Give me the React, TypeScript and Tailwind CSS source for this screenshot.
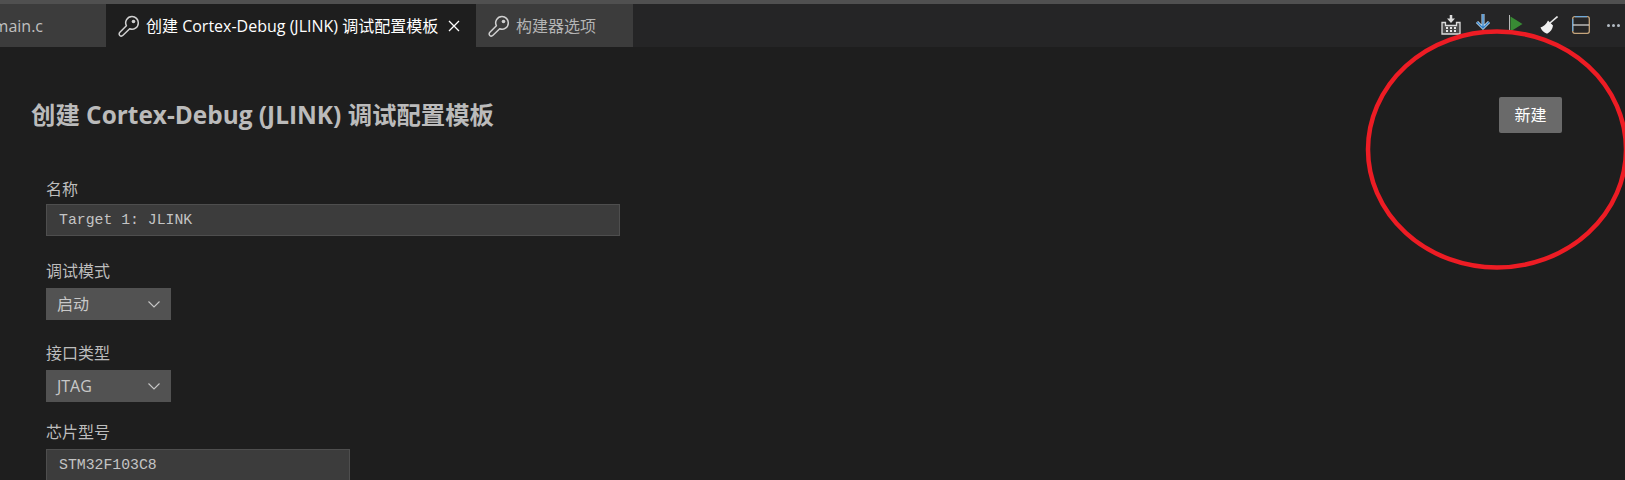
const CJK = "font-['Open_Sans','Noto_Sans_CJK_SC',sans-serif]";

function KeyIcon() {
  return (
    <svg width="22" height="22" viewBox="0 0 22 22" fill="none" stroke="#d0d0d0" strokeWidth="1.500" strokeLinejoin="round" className="shrink-0">
      <path d="M14 1.500a6.300 6.300 0 0 1 6.300 6.400 6.300 6.300 0 0 1-8.600 5.800L5 20.300c-1 1-2.300 1-3.200.2-.9-.9-.9-2.200.1-3.200l6.500-6.600A6.300 6.300 0 0 1 14 1.500z" />
      <circle cx="15.500" cy="6.500" r="1.800" fill="#d0d0d0" stroke="none" />
    </svg>
  );
}

function Chevron() {
  return (
    <svg width="14" height="14" viewBox="0 0 14 14" fill="none" stroke="#c8c8c8" strokeWidth="1.100">
      <path d="M1.500 4.500 7 10l5.500-5.500" />
    </svg>
  );
}

function Toolbar() {
  return (
    <div className="ml-auto flex h-full items-center">
      <svg width="20" height="20" viewBox="0 0 20 20" className="mb-[2px]">
        <path d="M10 0v6" stroke="#dcdcdc" strokeWidth="2.500" fill="none" />
        <path d="M6 3.500 10 8l4-4.500z" fill="#dcdcdc" />
        <path d="M1 7.500h3.500v3h11v-3H19V19H1z" fill="#4a4a4a" stroke="#dcdcdc" strokeWidth="1.300" />
        <path d="M5 12h2v2H5zM9 12h2v2H9zM13 12h2v2h-2zM5 15h2v2H5zM9 15h2v2H9zM13 15h2v2h-2z" fill="#e8e8e8" />
      </svg>
      <svg width="16" height="21" viewBox="0 0 16 21" className="mb-[5px] ml-[14px]">
        <path d="M8 1v14M2 9l6 6 6-6" stroke="#c8dcec" strokeWidth="3" fill="none" />
        <path d="M8 1v14M2 9l6 6 6-6" stroke="#2f7fc8" strokeWidth="1.300" fill="none" />
        <path d="M1 19.500h14" stroke="#e0e0e0" strokeWidth="2" />
      </svg>
      <svg width="14" height="18" viewBox="0 0 14 18" className="mb-[4px] ml-[18px]">
        <path d="M.5 0v18" stroke="#b8b8b8" strokeWidth="1" />
        <path d="M1.500 1.500v15L13.500 9z" fill="#388a34" />
      </svg>
      <svg width="18" height="18" viewBox="0 0 18 18" className="mb-[2px] ml-[17px]">
        <path d="M17.500.5 10 7" stroke="#e8e8e8" strokeWidth="1.600" />
        <path d="M8 4.500 13 9.500c-.4 3.500-2.500 6.500-5.500 8C5 17.500 2 15 .5 11.500 3.500 10.500 6.500 8 8 4.500z" fill="#f0f0f0" />
      </svg>
      <svg width="18" height="18" viewBox="0 0 18 18" fill="none" className="mb-[1px] ml-[14px]">
        <rect x=".7" y=".7" width="16.600" height="16.600" rx="2" stroke="#c5a57c" strokeWidth="1.300" />
        <path d="M.7 3v12M3 .7h12" stroke="#6fa8d8" strokeWidth="1.300" />
        <path d="M1 9h16" stroke="#d0d0d0" strokeWidth="1.300" />
      </svg>
      <div className="mr-[5px] ml-[17px] flex gap-[2px]">
        <span className="size-[3px] rounded-full bg-[#b4bcc4]" />
        <span className="size-[3px] rounded-full bg-[#b4bcc4]" />
        <span className="size-[3px] rounded-full bg-[#b4bcc4]" />
      </div>
    </div>
  );
}

function Field({ label, className, children }: { label: string; className: string; children: React.ReactNode }) {
  return (
    <div className={`flex flex-col ${className}`}>
      <label className="h-[20px] text-[16px] leading-[20px] text-[#bdbdbd]">{label}</label>
      {children}
    </div>
  );
}

function TextBox({ value, width }: { value: string; width: string }) {
  return (
    <div className={`flex h-[32px] items-center border border-[#4e4e4e] bg-[#3c3c3c] pl-[12px] font-['Liberation_Mono',monospace] text-[14.800px] text-[#c4c4c4] ${width}`}>
      {value}
    </div>
  );
}

function Select({ value }: { value: string }) {
  return (
    <div className="flex h-[32px] w-[125px] items-center justify-between bg-[#525252] pl-[11px] pr-[10px] text-[16px] text-[#c8c8c8]">
      {value}
      <Chevron />
    </div>
  );
}

export default function App() {
  return (
    <div className={`relative h-[480px] w-[1625px] overflow-hidden bg-[#1e1e1e] ${CJK}`}>
      <div className="h-[4px] bg-[#505050]" />
      {/* Tabs */}
      <div className="flex h-[43px] items-center bg-[#252526] text-[16px]">
        <div className="flex h-full w-[106px] items-center justify-end bg-[#3c3c3c] pr-[63px] text-[#c0c0c0]">
          <span className="whitespace-nowrap">main.c</span>
        </div>
        <div className="flex h-full w-[370px] items-center bg-[#1e1e1e] pl-[12px] text-white">
          <KeyIcon />
          <span className="ml-[6px] whitespace-nowrap">创建 Cortex-Debug (JLINK) 调试配置模板</span>
          <svg width="12" height="12" viewBox="0 0 12 12" stroke="#fff" strokeWidth="1.300" className="ml-[10px] shrink-0">
            <path d="M1 1l10 10M11 1 1 11" />
          </svg>
        </div>
        <div className="flex h-full w-[157px] items-center bg-[#3c3c3c] pl-[12px] text-[#b4b4b4]">
          <KeyIcon />
          <span className="ml-[6px]">构建器选项</span>
        </div>
        <Toolbar />
      </div>
      {/* Page */}
      <div className="flex items-center justify-between pl-[31px] pr-[63px] pt-[50px]">
        <h1 className="text-[24.400px] leading-[36px] font-bold text-[#bbbbbb]">创建 Cortex-Debug (JLINK) 调试配置模板</h1>
        <button className="h-[36px] w-[63px] rounded-[2px] bg-[#6a6a6a] text-[16px] text-white">新建</button>
      </div>
      <div className="ml-[46px] flex flex-col">
        <Field label="名称" className="mt-[46px] gap-[5px]">
          <TextBox value="Target 1: JLINK" width="w-[574px]" />
        </Field>
        <Field label="调试模式" className="mt-[25px] gap-[7px]">
          <Select value="启动" />
        </Field>
        <Field label="接口类型" className="mt-[23px] gap-[7px]">
          <Select value="JTAG" />
        </Field>
        <Field label="芯片型号" className="mt-[20px] gap-[7px]">
          <TextBox value="STM32F103C8" width="w-[304px]" />
        </Field>
      </div>
      {/* annotation drawn over the screenshot */}
      <svg width="1625" height="480" className="pointer-events-none absolute inset-0">
        <ellipse cx="1497" cy="149.500" rx="129" ry="118" fill="none" stroke="#ed1c24" strokeWidth="4.500" />
      </svg>
    </div>
  );
}
